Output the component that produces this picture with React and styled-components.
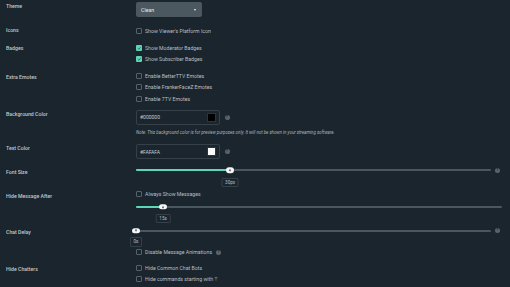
import React from "react";
import styled, { createGlobalStyle } from "styled-components";

const Global = createGlobalStyle`
  html, body { margin: 0; padding: 0; background: #1a252e; }
  body { font-family: Roboto, "Liberation Sans", sans-serif; overflow: hidden; }
`;

const Page = styled.div`
  width: 510px;
  height: 287px;
  background: #1a252e;
  overflow: hidden;
  display: flex;
  flex-direction: column;
`;

const Section = styled.div`
  display: grid;
  grid-template-columns: 130px 1fr;
  padding-left: 6px;
  margin-top: ${(p) => p.$mt || 0}px;
`;

const Label = styled.div`
  font-size: 5.2px;
  line-height: 8px;
  font-weight: 500;
  color: #c3c8cc;
  padding-top: ${(p) => p.$pt || 0}px;
  white-space: nowrap;
`;

const Control = styled.div`
  display: flex;
  flex-direction: column;
  align-items: flex-start;
`;

const Select = styled.div`
  margin-top: 2px;
  width: 66px;
  height: 15px;
  box-sizing: border-box;
  background: #4b5860;
  border-radius: 2px;
  padding: 0 6px 0 5px;
  display: flex;
  align-items: center;
  justify-content: space-between;
  font-size: 5.2px;
  color: #e6e9eb;
`;

const Caret = styled.span`
  width: 0;
  height: 0;
  border-left: 1.6px solid transparent;
  border-right: 1.6px solid transparent;
  border-top: 2px solid #f2f4f5;
`;

const CheckRow = styled.div`
  display: flex;
  align-items: center;
  gap: 3px;
  height: 11.5px;
  font-size: 5.2px;
  color: #b9bfc4;
  white-space: nowrap;
`;

const Box = styled.span`
  width: 6px;
  height: 6px;
  box-sizing: border-box;
  border-radius: 1px;
  border: ${(p) => (p.$on ? "none" : "0.8px solid #56626b")};
  background: ${(p) => (p.$on ? "#5dd4b2" : "transparent")};
  display: flex;
  align-items: center;
  justify-content: center;
  flex-shrink: 0;
`;

const Help = styled.span`
  width: 5px;
  height: 5px;
  border-radius: 50%;
  background: #5a656d;
  color: #1a252e;
  font-size: 3.6px;
  font-weight: 700;
  line-height: 5px;
  text-align: center;
  flex-shrink: 0;
  margin-left: ${(p) => p.$ml || 0}px;
`;

const InputLine = styled.div`
  display: flex;
  align-items: center;
`;

const ColorInput = styled.div`
  width: 84px;
  height: 15px;
  box-sizing: border-box;
  border: 1px solid #354149;
  border-radius: 2px;
  display: flex;
  align-items: center;
  justify-content: space-between;
  padding: 0 3px 0 3px;
  font-size: 5px;
  color: #c5cace;
`;

const Swatch = styled.span`
  width: 7px;
  height: 7px;
  background: ${(p) => p.$c};
  border: 0.5px solid #2b353d;
`;

const Note = styled.div`
  margin-top: 5px;
  font-size: 4.4px;
  line-height: 6px;
  font-style: italic;
  color: #aeb4b9;
  white-space: nowrap;
`;

const SliderRow = styled.div`
  display: flex;
  align-items: center;
  height: 6px;
  margin-top: ${(p) => p.$mt || 0}px;
  width: 100%;
`;

const Track = styled.div`
  position: relative;
  width: ${(p) => p.$w}px;
  height: 2px;
  border-radius: 1px;
  background: #4a5760;
`;

const Fill = styled.div`
  position: absolute;
  left: 0;
  top: 0;
  height: 2px;
  border-radius: 1px;
  background: #5dd6b3;
`;

const Thumb = styled.div`
  position: absolute;
  top: 50%;
  width: 8px;
  height: 5.5px;
  border-radius: 3px;
  background: #f4f6f7;
  transform: translate(-50%, -50%);
  display: flex;
  align-items: center;
  justify-content: center;
  gap: 0.8px;
  &::before, &::after {
    content: "";
    width: 1px;
    height: 2px;
    border-radius: 0.5px;
    background: #6c767d;
  }
`;

const BubbleLane = styled.div`
  position: relative;
  width: ${(p) => p.$w}px;
  height: 9.5px;
  margin-top: ${(p) => p.$mt || 0}px;
`;

const Bubble = styled.div`
  position: absolute;
  top: 0;
  height: 9.5px;
  box-sizing: border-box;
  padding: 0 2.5px;
  border: 0.8px solid #34414a;
  border-radius: 1px;
  transform: translateX(-50%);
  font-size: 4.6px;
  line-height: 8px;
  color: #b9bfc4;
  white-space: nowrap;
`;

const Check = () => (
  <svg width="4.4" height="4.4" viewBox="0 0 10 10">
    <path d="M2 5.2 L4.2 7.3 L8.2 2.8" fill="none" stroke="#1f4a43" strokeWidth="1.6" />
  </svg>
);

const CheckItem = ({ on, children, help }) => (
  <CheckRow>
    <Box $on={on}>{on && <Check />}</Box>
    {children}
    {help && <Help $ml={1}>?</Help>}
  </CheckRow>
);

const Slider = ({ w, pct, value, mt, bubbleMt, help }) => (
  <>
    <SliderRow $mt={mt}>
      <Track $w={w}>
        <Fill style={{ width: `${pct}%` }} />
        <Thumb style={{ left: `${pct}%` }} />
      </Track>
      {help && <Help $ml={4}>?</Help>}
    </SliderRow>
    <BubbleLane $w={w} $mt={bubbleMt}>
      <Bubble style={{ left: `${pct}%` }}>{value}</Bubble>
    </BubbleLane>
  </>
);

export default function App() {
  return (
    <>
      <Global />
      <Page>
        <Section>
          <Label $pt={2}>Theme</Label>
          <Control>
            <Select>
              Clean
              <Caret />
            </Select>
          </Control>
        </Section>

        <Section $mt={8}>
          <Label $pt={1}>Icons</Label>
          <Control>
            <CheckItem>Show Viewer's Platform Icon</CheckItem>
          </Control>
        </Section>

        <Section $mt={5.5}>
          <Label $pt={2.2}>Badges</Label>
          <Control>
            <CheckItem on>Show Moderator Badges</CheckItem>
            <CheckItem on>Show Subscriber Badges</CheckItem>
          </Control>
        </Section>

        <Section $mt={4.75}>
          <Label $pt={2.75}>Extra Emotes</Label>
          <Control>
            <CheckItem>Enable BetterTTV Emotes</CheckItem>
            <CheckItem>Enable FrankerFaceZ Emotes</CheckItem>
            <CheckItem>Enable 7TV Emotes</CheckItem>
          </Control>
        </Section>

        <Section $mt={5.5}>
          <Label $pt={0.7}>Background Color</Label>
          <Control>
            <InputLine>
              <ColorInput>
                #000000
                <Swatch $c="#000000" />
              </ColorInput>
              <Help $ml={4.5}>?</Help>
            </InputLine>
            <Note>
              Note: This background color is for preview purposes only. It will not be shown in your streaming software.
            </Note>
          </Control>
        </Section>

        <Section $mt={8.7}>
          <Label $pt={0}>Text Color</Label>
          <Control>
            <InputLine>
              <ColorInput>
                #FAFAFA
                <Swatch $c="#fafafa" />
              </ColorInput>
              <Help $ml={4.5}>?</Help>
            </InputLine>
          </Control>
        </Section>

        <Section $mt={7.7}>
          <Label $pt={1}>Font Size</Label>
          <Control>
            <Slider w={355} pct={26.5} value="30px" bubbleMt={4.6} help />
          </Control>
        </Section>

        <Section $mt={0.8}>
          <Label $pt={3.5}>Hide Message After</Label>
          <Control>
            <CheckItem>Always Show Messages</CheckItem>
            <Slider w={366} pct={7.4} value="15s" mt={4.3} bubbleMt={4} />
          </Control>
        </Section>

        <Section $mt={4.2}>
          <Label $pt={0.7}>Chat Delay</Label>
          <Control>
            <Slider w={355} pct={0} value="0s" bubbleMt={3.7} help />
            <CheckItem help>Disable Message Animations</CheckItem>
          </Control>
        </Section>

        <Section $mt={3.75}>
          <Label $pt={2.8}>Hide Chatters</Label>
          <Control>
            <CheckItem>Hide Common Chat Bots</CheckItem>
            <CheckItem>Hide commands starting with '!'</CheckItem>
          </Control>
        </Section>
      </Page>
    </>
  );
}
